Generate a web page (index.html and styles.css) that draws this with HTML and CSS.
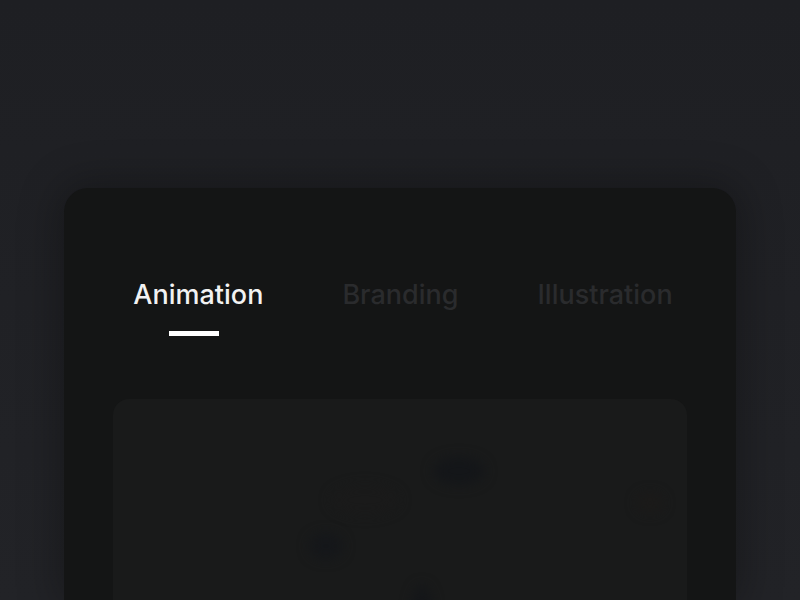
FILE: index.html
```html
<!DOCTYPE html>
<html lang="en">
<head>
<meta charset="utf-8">
<title>Portfolio tabs</title>
<link rel="stylesheet" href="styles.css">
</head>
<body>
<main class="page">
  <section class="card">
    <nav class="tabs">
      <div class="tab tab-active">
        <span class="tab-label">Animation</span>
        <span class="tab-indicator"></span>
      </div>
      <div class="tab"><span class="tab-label">Branding</span></div>
      <div class="tab"><span class="tab-label">Illustration</span></div>
    </nav>
    <div class="panel">
      <span class="blob blob-a"></span>
      <span class="blob blob-b"></span>
      <span class="blob blob-c"></span>
      <span class="blob blob-warm-a"></span>
      <span class="blob blob-warm-b"></span>
    </div>
  </section>
</main>
</body>
</html>
```
FILE: styles.css
```css
html, body {
  margin: 0;
  padding: 0;
  height: 100%;
}
body {
  background: linear-gradient(180deg, #1e1f23 0%, #202125 50%, #222327 100%);
  font-family: Inter, "Noto Sans", "Liberation Sans", sans-serif;
  overflow: hidden;
}
.page {
  padding: 188px 64px 0;
}
.card {
  background: #141515;
  border-radius: 24px 24px 0 0;
  padding: 91px 49px 0;
  height: 412px;
  box-sizing: border-box;
  overflow: hidden;
  box-shadow: 0 0 40px 6px rgba(0, 0, 0, 0.28);
}
.tabs {
  display: flex;
  justify-content: center;
  gap: 79px;
  font-size: 27px;
  line-height: 31px;
  font-weight: 500;
  padding-left: 6px;
}
.tab {
  display: flex;
  flex-direction: column;
  color: #2a2b2d;
}
.tab-active {
  color: #f2f2f2;
}
.tab-indicator {
  display: block;
  width: 50px;
  height: 5px;
  background: #ffffff;
  margin: 21px 0 0 36px;
}
.panel {
  position: relative;
  overflow: hidden;
  margin-top: 63px;
  height: 300px;
  background: #191a1a;
  border-radius: 16px 16px 0 0;
}
.blob {
  position: absolute;
  border-radius: 50%;
  filter: blur(6px);
}
.blob-a {
  left: 320px; top: 58px; width: 52px; height: 28px;
  background: #141619;
}
.blob-b {
  left: 196px; top: 134px; width: 34px; height: 26px;
  background: #15171a;
}
.blob-c {
  left: 298px; top: 186px; width: 22px; height: 60px;
  background: #141619;
}
.blob-warm-a {
  left: 218px; top: 86px; width: 68px; height: 30px;
  background: #1a1a1a;
}
.blob-warm-b {
  left: 524px; top: 94px; width: 26px; height: 20px;
  background: #1b1a19;
}
```
